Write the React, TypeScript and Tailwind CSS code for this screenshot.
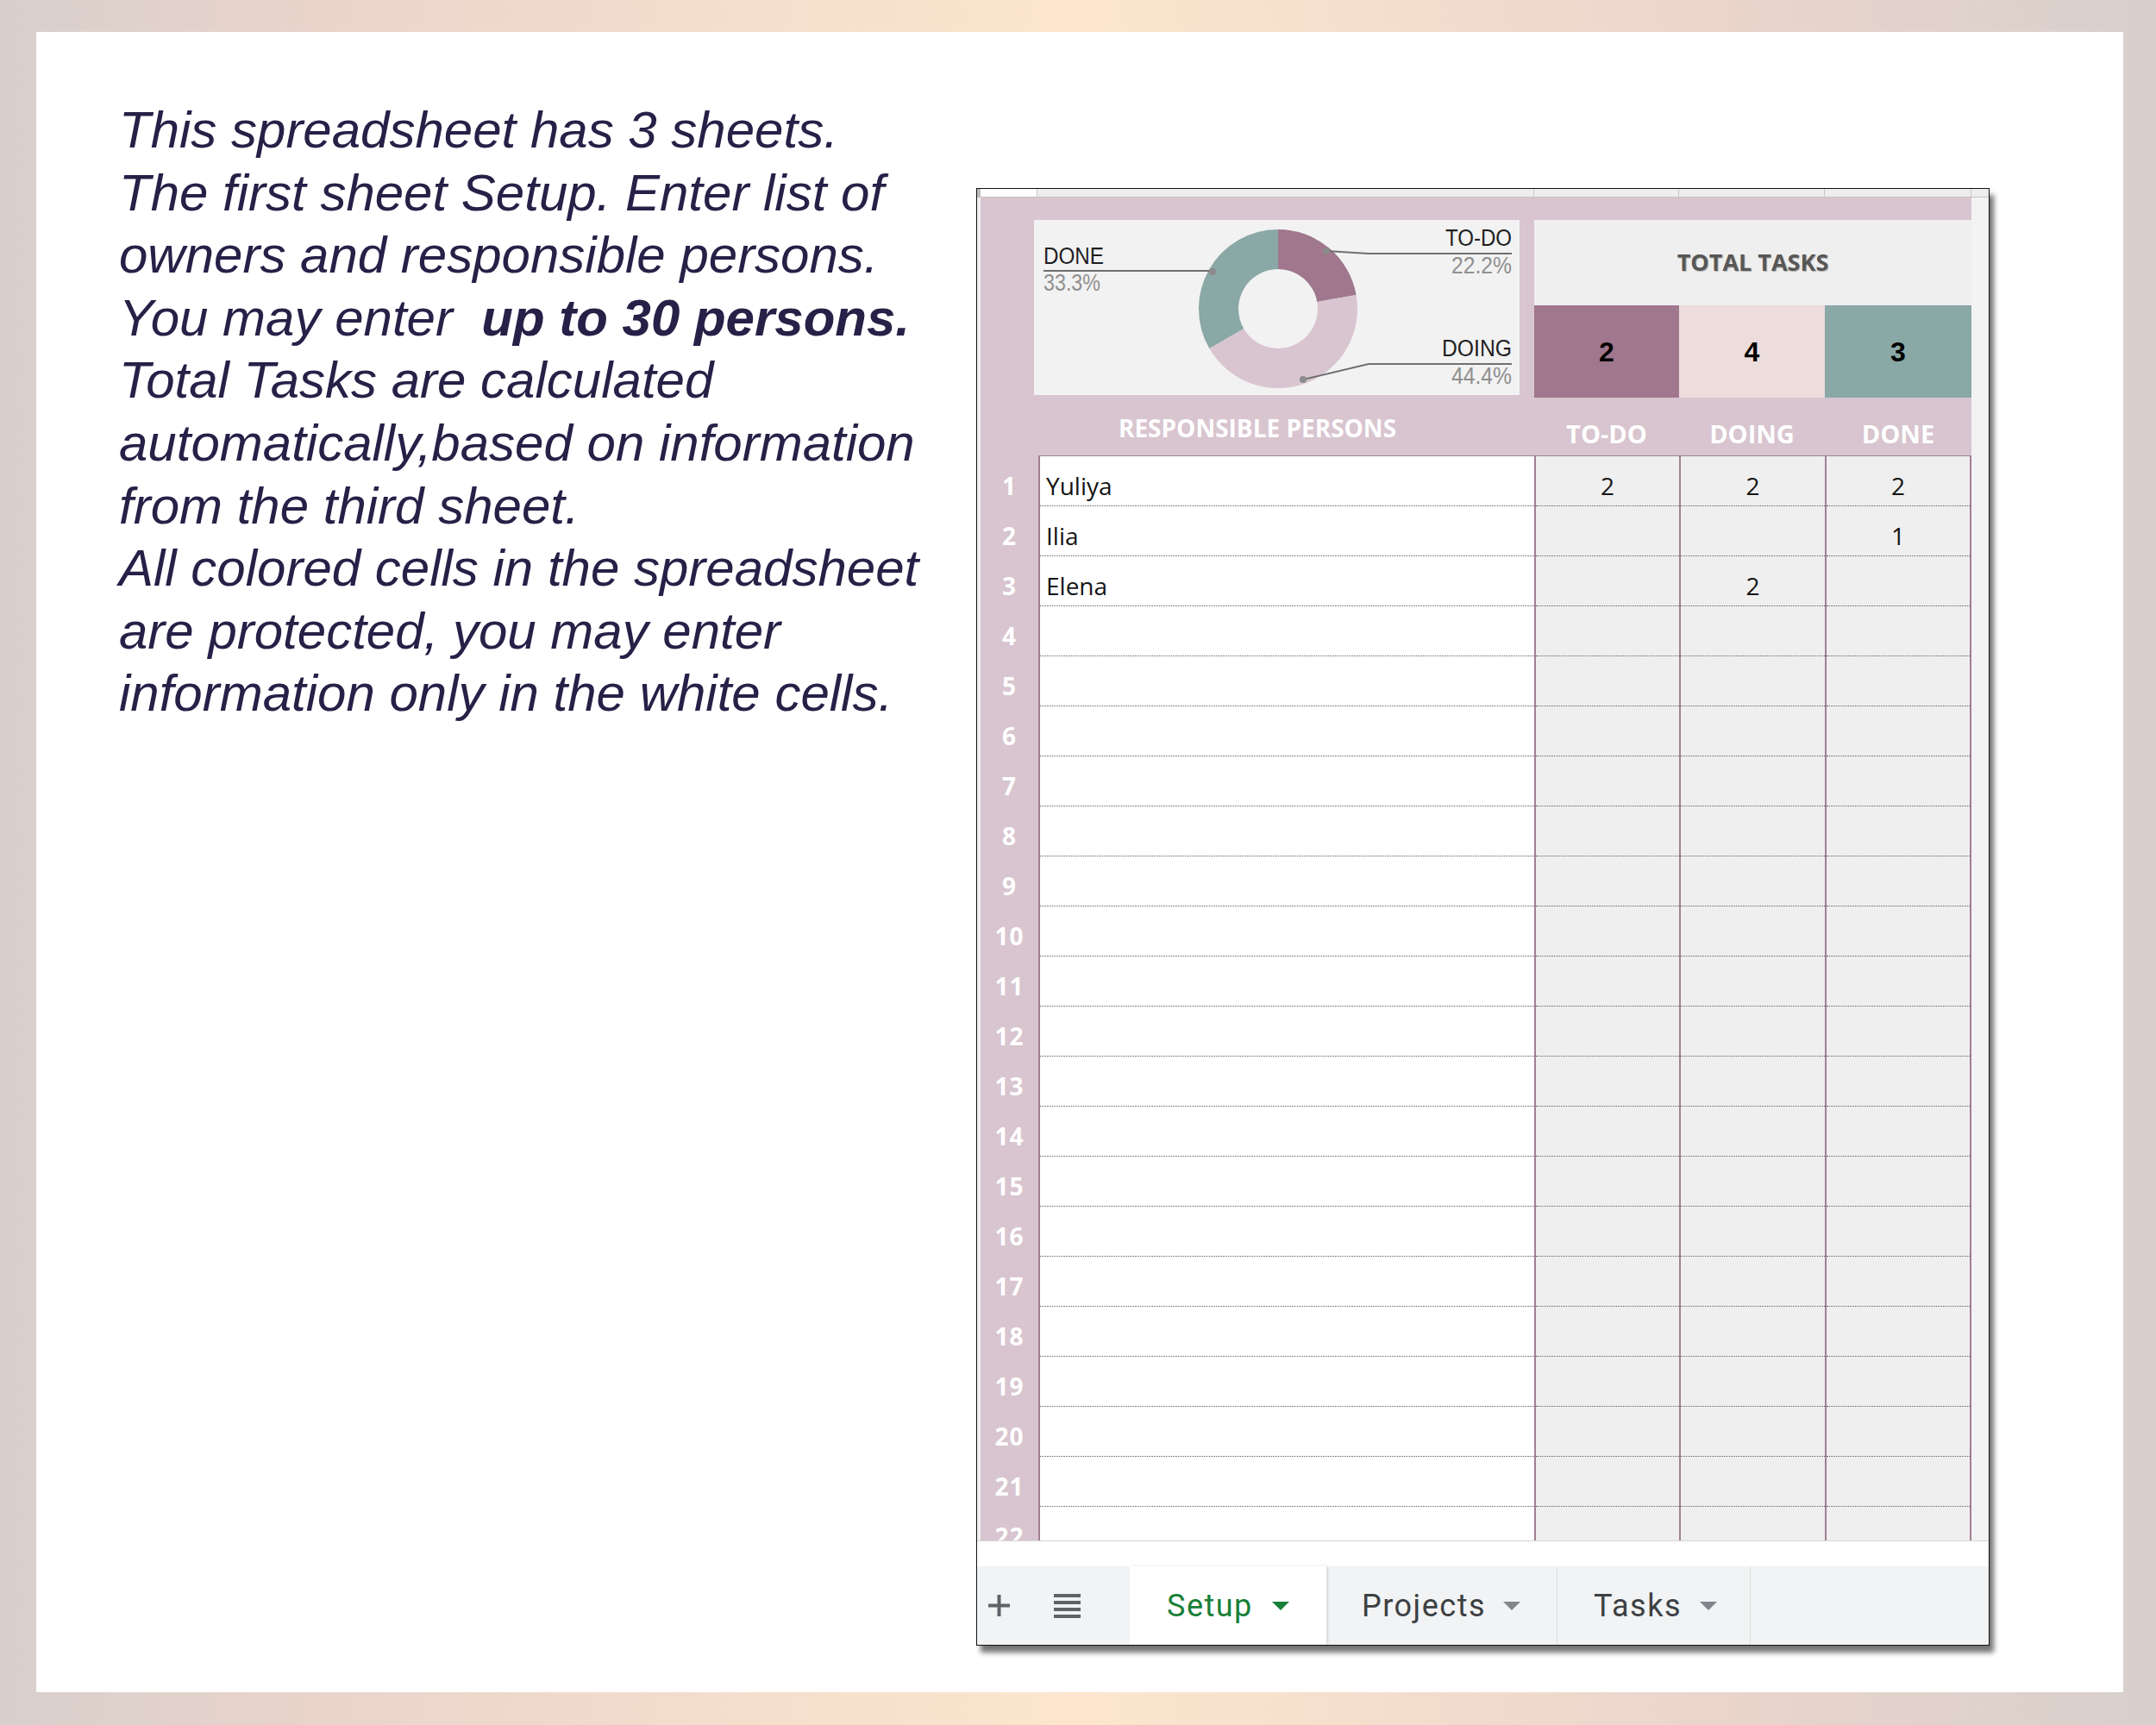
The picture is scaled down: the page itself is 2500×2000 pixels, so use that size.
import React from "react";

const rowNumbers = Array.from({ length: 22 }, (_, i) => i + 1);
const names = ["Yuliya", "Ilia", "Elena"];
const todo = ["2", "", ""];
const doing = ["2", "", "2"];
const done = ["2", "1", ""];

function Intro() {
  return (
    <div className="w-[1090px] shrink-0 pl-[96px] pt-[78px] font-['Liberation_Sans',Arial,sans-serif] italic text-[60px] leading-[72.6px] text-[#272047] whitespace-nowrap">
      <div>This spreadsheet has 3 sheets.</div>
      <div>The first sheet Setup. Enter list of</div>
      <div>owners and responsible persons.</div>
      <div>
        You may enter&nbsp; <b className="font-bold">up to 30 persons.</b>
      </div>
      <div>Total Tasks are calculated</div>
      <div>automatically,based on information</div>
      <div>from the third sheet.</div>
      <div>All colored cells in the spreadsheet</div>
      <div>are protected, you may enter</div>
      <div>information only in the white cells.</div>
    </div>
  );
}

function Donut() {
  return (
    <svg width="563" height="203" viewBox="0 0 563 203" className="block">
      <path d="M283 11 A92 92 0 0 1 373.6 87 L328.3 95 A46 46 0 0 0 283 57 Z" fill="#a0778d" />
      <path d="M373.6 87 A92 92 0 0 1 203.3 149 L243.2 126 A46 46 0 0 0 328.3 95 Z" fill="#d9c5d0" />
      <path d="M203.3 149 A92 92 0 0 1 283 11 L283 57 A46 46 0 0 0 243.2 126 Z" fill="#8aa8a5" />
      <g stroke="#6f6f6f" strokeWidth="2" fill="none">
        <polyline points="11,59 207,59" />
        <polyline points="339,36 388,39 554,39" />
        <polyline points="312,185 388,167 554,167" />
      </g>
      <g fill="#8a8a8a">
        <circle cx="207" cy="60" r="4" />
        <circle cx="339" cy="36" r="4" />
        <circle cx="312" cy="185" r="4" />
      </g>
      <g fontFamily="Liberation Sans, Arial, sans-serif" fontSize="27">
        <text x="11" y="51" fill="#1f1f1f" textLength="70" lengthAdjust="spacingAndGlyphs">DONE</text>
        <text x="11" y="82" fill="#8f8f8f" textLength="66" lengthAdjust="spacingAndGlyphs">33.3%</text>
        <text x="477" y="30" fill="#1f1f1f" textLength="77" lengthAdjust="spacingAndGlyphs">TO-DO</text>
        <text x="484" y="62" fill="#8f8f8f" textLength="70" lengthAdjust="spacingAndGlyphs">22.2%</text>
        <text x="473" y="158" fill="#1f1f1f" textLength="81" lengthAdjust="spacingAndGlyphs">DOING</text>
        <text x="484" y="190" fill="#8f8f8f" textLength="70" lengthAdjust="spacingAndGlyphs">44.4%</text>
      </g>
    </svg>
  );
}

function ValueColumn({ values, width, last }: { values: string[]; width: string; last?: boolean }) {
  return (
    <div className={`${width} flex flex-col bg-[#efefef] border-l-2 border-t border-[#a27f93] ${last ? "border-r-2" : ""}`}>
      {rowNumbers.map((n, i) => (
        <div key={n} className="h-[58px] shrink-0 border-b border-dotted border-[#5c5c5c] flex items-center justify-center pt-[10px] text-[28px] text-[#141414]">
          {values[i] ?? ""}
        </div>
      ))}
    </div>
  );
}

function Sheet() {
  return (
    <div className="mt-[181px] w-[1175px] h-[1690px] border border-[#111] bg-white shadow-[5px_8px_6px_rgba(0,0,0,0.55)] flex flex-col font-['Open_Sans',sans-serif]">
      {/* column header remnants */}
      <div className="h-[10px] flex bg-[#ededed] border-b border-[#c4c4c4]">
        <div className="w-[4px] bg-[#bdbdbd]" />
        <div className="w-[66px] bg-white border-r border-[#c8c8c8]" />
        <div className="w-[576px] border-r border-[#c8c8c8]" />
        <div className="w-[168px] border-r border-[#c8c8c8]" />
        <div className="w-[169px] border-r border-[#c8c8c8]" />
        <div className="w-[170px] border-r border-[#c8c8c8]" />
      </div>

      <div className="h-[1557px] flex">
        <div className="w-[4px] bg-[#f1f1f1]" />
        <div className="w-[1149px] bg-[#d8c5cf] flex flex-col overflow-hidden">
          <div className="h-[26px] shrink-0" />

          {/* chart + totals */}
          <div className="h-[206px] shrink-0 flex pl-[62px]">
            <div className="w-[563px] h-[203px] bg-[#f2f2f2]">
              <Donut />
            </div>
            <div className="ml-[17px] w-[507px] flex flex-col">
              <div className="h-[99px] bg-[#efefef] flex items-center justify-center text-[27px] font-bold text-[#575757] [text-shadow:1px_1px_1px_rgba(0,0,0,0.25)]">
                TOTAL TASKS
              </div>
              <div className="h-[107px] flex font-['Liberation_Sans',Arial,sans-serif] font-bold text-[32px] text-black">
                <div className="w-[168px] bg-[#a0778d] flex items-center justify-center">2</div>
                <div className="w-[169px] bg-[#ecdcdc] flex items-center justify-center">4</div>
                <div className="w-[170px] bg-[#8aa8a5] flex items-center justify-center">3</div>
              </div>
            </div>
          </div>

          {/* header row */}
          <div className="h-[67px] shrink-0 flex text-white font-bold text-[28px]">
            <div className="w-[642px] flex items-center justify-center pt-[3px]">RESPONSIBLE PERSONS</div>
            <div className="w-[168px] flex items-center justify-center pt-[16px] text-[29px]">TO-DO</div>
            <div className="w-[169px] flex items-center justify-center pt-[16px] text-[29px]">DOING</div>
            <div className="w-[170px] flex items-center justify-center pt-[16px] text-[29px]">DONE</div>
          </div>

          {/* data */}
          <div className="flex-1 flex overflow-hidden">
            <div className="w-[67px] flex flex-col pt-px">
              {rowNumbers.map((n) => (
                <div key={n} className="h-[58px] shrink-0 flex items-center justify-center pt-[10px] text-white font-bold text-[28px] tracking-[1px]">
                  {n}
                </div>
              ))}
            </div>
            <div className="w-[575px] flex flex-col bg-white border-l-2 border-t border-[#a27f93]">
              {rowNumbers.map((n, i) => (
                <div key={n} className="h-[58px] shrink-0 border-b border-dotted border-[#5c5c5c] flex items-center pl-[7px] pt-[10px] text-[28px] text-[#141414]">
                  {names[i] ?? ""}
                </div>
              ))}
            </div>
            <ValueColumn values={todo} width="w-[168px]" />
            <ValueColumn values={doing} width="w-[169px]" />
            <ValueColumn values={done} width="w-[170px]" last />
          </div>
        </div>
        <div className="flex-1 bg-[#f3f3f3]" />
      </div>

      <div className="h-[30px] bg-white border-t border-[#d5d5d5]" />

      {/* sheet tabs */}
      <div className="h-[91px] flex bg-[#f1f3f4] font-['Roboto',sans-serif] text-[36px] tracking-[1.5px]">
        <div className="w-[177px] flex items-center">
          <svg width="27" height="27" viewBox="0 0 27 27" className="ml-[12px]">
            <path d="M13.5 1v25M1 13.5h25" stroke="#5f6368" strokeWidth="4" />
          </svg>
          <svg width="31" height="28" viewBox="0 0 31 28" className="ml-[50px]">
            <g fill="#5f6368">
              <rect x="0" y="0" width="31" height="4" />
              <rect x="0" y="8" width="31" height="4" />
              <rect x="0" y="16" width="31" height="4" />
              <rect x="0" y="24" width="31" height="4" />
            </g>
          </svg>
        </div>
        <div className="w-[228px] bg-white flex items-center pl-[43px] text-[#188038] shadow-[2px_0_3px_rgba(0,0,0,0.12)]">
          Setup
          <svg width="20" height="10" viewBox="0 0 20 10" className="ml-[22px]">
            <polygon points="0,0 20,0 10,10" fill="#188038" />
          </svg>
        </div>
        <div className="w-[268px] flex items-center pl-[41px] text-[#3c4043] border-r border-[#dedede]">
          Projects
          <svg width="20" height="10" viewBox="0 0 20 10" className="ml-[20px]">
            <polygon points="0,0 20,0 10,10" fill="#80868b" />
          </svg>
        </div>
        <div className="w-[224px] flex items-center pl-[42px] text-[#3c4043] border-r border-[#dedede]">
          Tasks
          <svg width="20" height="10" viewBox="0 0 20 10" className="ml-[21px]">
            <polygon points="0,0 20,0 10,10" fill="#80868b" />
          </svg>
        </div>
      </div>
    </div>
  );
}

export default function App() {
  return (
    <div className="w-[2500px] h-[2000px] pt-[37px] pl-[42px] bg-[linear-gradient(to_right,#d8cfcc_0%,#ebd4cb_16%,#fde6cd_50%,#ecd5cc_78%,#d8cfcc_100%)]">
      <div className="w-[2420px] h-[1925px] bg-white flex items-start">
        <Intro />
        <Sheet />
      </div>
    </div>
  );
}
